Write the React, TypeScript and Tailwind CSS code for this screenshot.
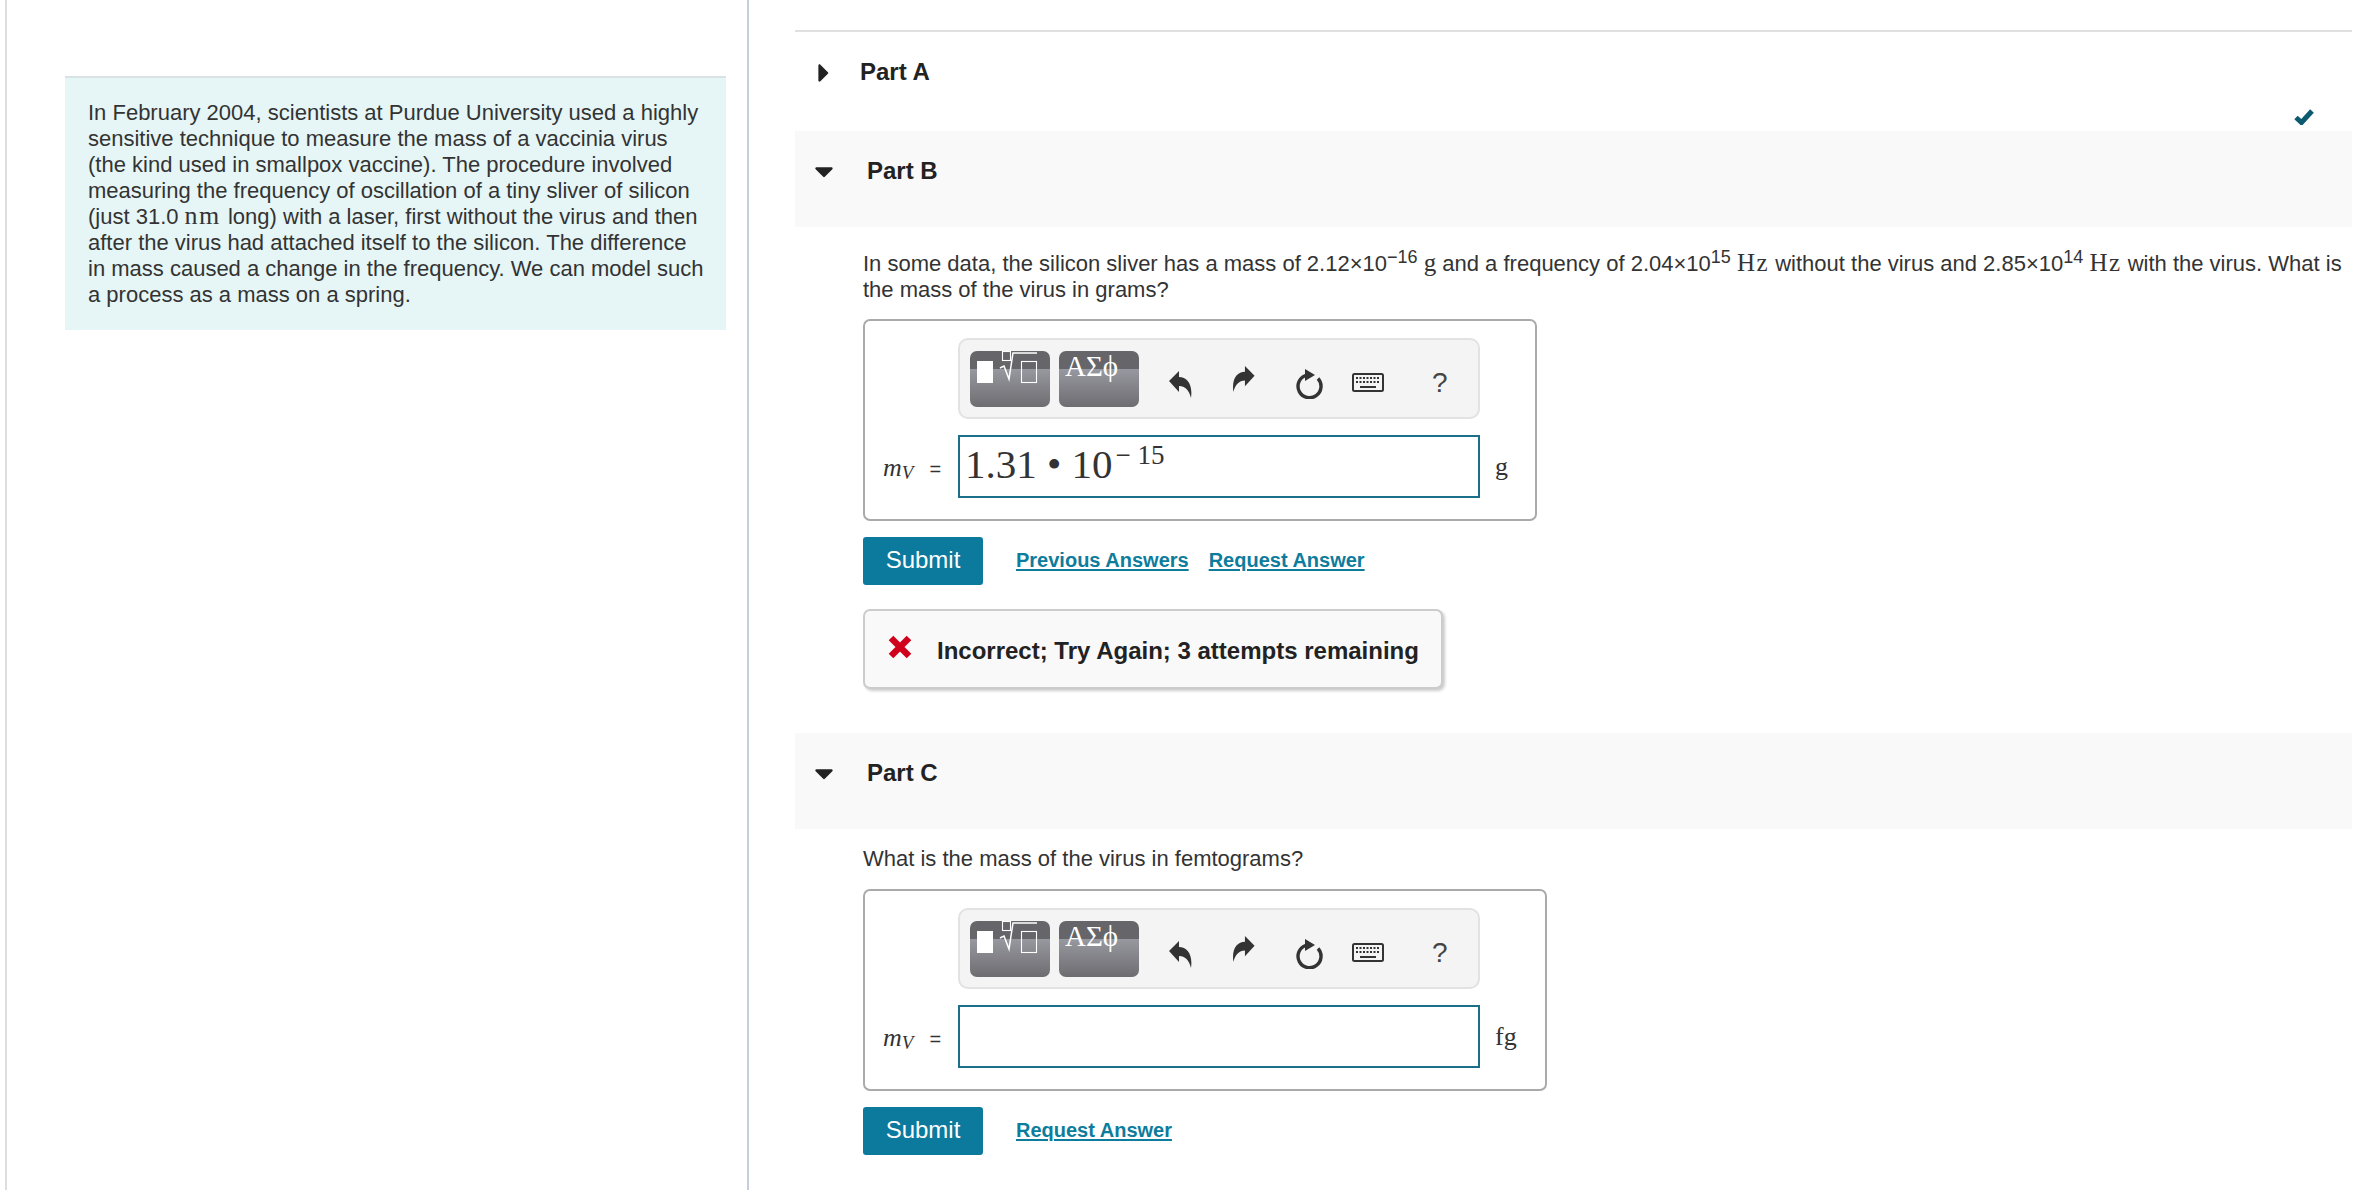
import { FaCaretDown, FaCaretRight } from "react-icons/fa";

const serif = "font-['Liberation_Serif',serif]";

function TemplateIcon() {
  return (
    <svg viewBox="0 0 80 56" className="w-[80px] h-[56px] absolute left-0 top-0" fill="none">
      <rect x="7" y="10" width="16" height="22" fill="#fff" />
      <rect x="32.5" y="0.5" width="8" height="9" stroke="#fff" strokeWidth="1.1" />
      <path d="M30 17l4-2 5 13 4-26h24" stroke="#fff" strokeWidth="1.5" />
      <rect x="51.5" y="10.5" width="15" height="21" stroke="#fff" strokeWidth="1.1" />
    </svg>
  );
}

function Toolbar() {
  return (
    <div className="h-[81px] w-[522px] ml-[93px] rounded-[10px] border-2 border-[#e2e2e2] bg-[#f4f4f4] flex items-start relative">
      <div className="mt-[11px] ml-[10px] w-[80px] h-[56px] relative rounded-[7px] bg-[linear-gradient(#66666a_0,#66666a_33%,#97979f_33%,#6d6d71_100%)]">
        <TemplateIcon />
      </div>
      <div className={`mt-[11px] ml-[9px] w-[80px] h-[56px] rounded-[7px] pl-[6px] bg-[linear-gradient(#66666a_0,#66666a_33%,#97979f_33%,#6d6d71_100%)] text-white text-[29px] leading-[30px] ${serif}`}>
        ΑΣϕ
      </div>
      {/* undo */}
      <svg viewBox="0 0 23 27" className="absolute left-[209px] top-[31px] w-[23px] h-[27px]" fill="#333">
        <path d="M0 10L10 0v6c8 0 14 7 12 21-2-8-6-12-12-12v6z" />
      </svg>
      {/* redo */}
      <svg viewBox="0 0 23 27" className="absolute left-[272px] top-[26px] w-[23px] h-[26px]" fill="#333">
        <path d="M23 10L13 0v6C5 6-1 13 1 27c2-8 6-12 12-12v6z" />
      </svg>
      {/* reset */}
      <svg viewBox="0 0 27 30" className="absolute left-[336px] top-[29px] w-[27px] h-[30px]" fill="none">
        <path d="M9.5 6.5A11.5 11.5 0 1 0 22 9.5" stroke="#333" strokeWidth="3.4" />
        <path d="M9 0l10 6-10 6z" fill="#333" />
      </svg>
      {/* keyboard */}
      <svg viewBox="0 0 32 19" className="absolute left-[392px] top-[33px] w-[32px] h-[19px]" fill="none">
        <rect x="1" y="1" width="30" height="17" rx="1.5" stroke="#333" strokeWidth="2" />
        <path d="M4 5h24M4 9h24" stroke="#333" strokeWidth="2" strokeDasharray="2 1.5" />
        <path d="M8 14h16" stroke="#333" strokeWidth="2" />
      </svg>
      <span className="absolute left-[472px] top-[27px] text-[#444] text-[28px] leading-[32px]">?</span>
    </div>
  );
}

function AnswerBox({ value, unit, width }: { value?: boolean; unit: string; width: string }) {
  return (
    <div className={`${width} h-[202px] rounded-[7px] border-2 border-[#aaa] pt-[17px]`}>
      <Toolbar />
      <div className="flex mt-[16px] h-[63px]">
        <div className={`w-[93px] pl-[18px] pt-[13px] text-[26px] text-[#333] ${serif} italic whitespace-nowrap`}>
          m<sub className="text-[19px] -bottom-[3px]">V</sub>
          <span className="not-italic font-['Liberation_Sans',sans-serif] text-[20px] ml-[16px]">=</span>
        </div>
        <div className={`w-[522px] h-[63px] border-2 border-[#1b6f88] text-[#333] ${serif} pl-[5px] pt-[2px] text-[41px] leading-[50px] whitespace-nowrap`}>
          {value && (
            <>
              1.31 • 10<sup className="text-[27px] -top-[14px] ml-[3px]">− 15</sup>
            </>
          )}
        </div>
        <div className={`ml-[15px] pt-[12px] text-[26px] text-[#333] ${serif}`}>{unit}</div>
      </div>
    </div>
  );
}

function SubmitRow({ previous }: { previous?: boolean }) {
  return (
    <div className="flex items-center h-[48px]">
      <div className="w-[120px] h-[48px] pb-[2px] rounded-[3px] bg-[#0b7a9d] text-white text-[24px] flex items-center justify-center">Submit</div>
      <div className="ml-[33px] pb-[2px] flex gap-[20px] text-[20px] font-bold text-[#0e7c9c] underline underline-offset-2">
        {previous && <span>Previous Answers</span>}
        <span>Request Answer</span>
      </div>
    </div>
  );
}

function PartHeader({ label }: { label: string }) {
  return (
    <div className="h-[96px] bg-[#f9f9f9] flex items-start pt-[24px]">
      <FaCaretDown className="ml-[14px] mt-[1px] text-[#222] text-[30px]" />
      <span className="ml-[28px] text-[24px] leading-[32px] font-bold text-[#222]">{label}</span>
    </div>
  );
}

export default function App() {
  return (
    <div className="w-[2372px] h-[1190px] overflow-hidden bg-white flex font-['Liberation_Sans',sans-serif] text-[#333]">
      {/* Left context pane */}
      <div className="ml-[5px] w-[744px] shrink-0 border-l-[2px] border-r-[2px] border-l-[#ddd] border-r-[#c3cede] pt-[76px] pl-[58px] pr-[21px]">
        <div className="h-[254px] border-t-[2px] border-[#d9e3e3] bg-[#e6f6f6] pl-[23px] pt-[22px] text-[22px] leading-[26px]">
          In February 2004, scientists at Purdue University used a highly
          <br />
          sensitive technique to measure the mass of a vaccinia virus
          <br />
          (the kind used in smallpox vaccine). The procedure involved
          <br />
          measuring the frequency of oscillation of a tiny sliver of silicon
          <br />
          (just 31.0 <span className={`${serif} text-[26px] leading-[20px] tracking-[1.5px] mr-[1px]`}>nm</span> long) with a laser, first without the virus and then
          <br />
          after the virus had attached itself to the silicon. The difference
          <br />
          in mass caused a change in the frequency. We can model such
          <br />
          a process as a mass on a spring.
        </div>
      </div>

      {/* Parts column */}
      <div className="ml-[46px] w-[1557px] shrink-0 pt-[30px]">
        <div className="border-t-2 border-[#e0e0e0] h-[101px] flex items-start pt-[24px] relative">
          <FaCaretRight className="ml-[14px] mt-[2px] text-[#222] text-[30px]" />
          <span className="ml-[21px] text-[24px] leading-[32px] font-bold text-[#222]">Part A</span>
          <svg viewBox="0 0 20 16" className="absolute right-[38px] top-[77px] w-[20px] h-[16px]" fill="none">
            <path d="M2 8.5l5.5 5L18 2" stroke="#0b5a70" strokeWidth="5" />
          </svg>
        </div>

        <PartHeader label="Part B" />
        <div className="pl-[68px]">
          <p className="mt-[24px] text-[22px] leading-[26px] whitespace-nowrap">
            In some data, the silicon sliver has a mass of 2.12×10<sup className="text-[18px] -top-[8px]">−16</sup>{" "}
            <span className={`${serif} text-[25px] leading-[20px]`}>g</span> and a frequency of 2.04×10<sup className="text-[18px] -top-[8px]">15</sup>{" "}
            <span className={`${serif} text-[25px] leading-[20px] tracking-[1.5px]`}>Hz</span> without the virus and 2.85×10<sup className="text-[18px] -top-[8px]">14</sup>{" "}
            <span className={`${serif} text-[25px] leading-[20px] tracking-[1.5px]`}>Hz</span> with the virus. What is
            <br />
            the mass of the virus in grams?
          </p>
          <div className="mt-[16px]">
            <AnswerBox value unit="g" width="w-[674px]" />
          </div>
          <div className="mt-[16px]">
            <SubmitRow previous />
          </div>
          <div className="mt-[24px] w-[580px] h-[80px] rounded-[7px] border-2 border-[#ccc] bg-[#f9f9f9] shadow-[2px_2px_3px_rgba(0,0,0,0.2)] flex items-center">
            <svg viewBox="0 0 24 24" className="ml-[23px] w-[24px] h-[24px] -mt-[4px]" fill="none">
              <path d="M3 3l18 18M21 3L3 21" stroke="#d0021b" strokeWidth="6.5" />
            </svg>
            <span className="ml-[25px] mt-[3px] text-[24px] font-bold text-[#222] whitespace-nowrap">Incorrect; Try Again; 3 attempts remaining</span>
          </div>
        </div>

        <div className="mt-[44px]">
          <PartHeader label="Part C" />
        </div>
        <div className="pl-[68px]">
          <p className="mt-[17px] text-[22px] leading-[26px]">What is the mass of the virus in femtograms?</p>
          <div className="mt-[17px]">
            <AnswerBox unit="fg" width="w-[684px]" />
          </div>
          <div className="mt-[16px]">
            <SubmitRow />
          </div>
        </div>
      </div>
    </div>
  );
}
